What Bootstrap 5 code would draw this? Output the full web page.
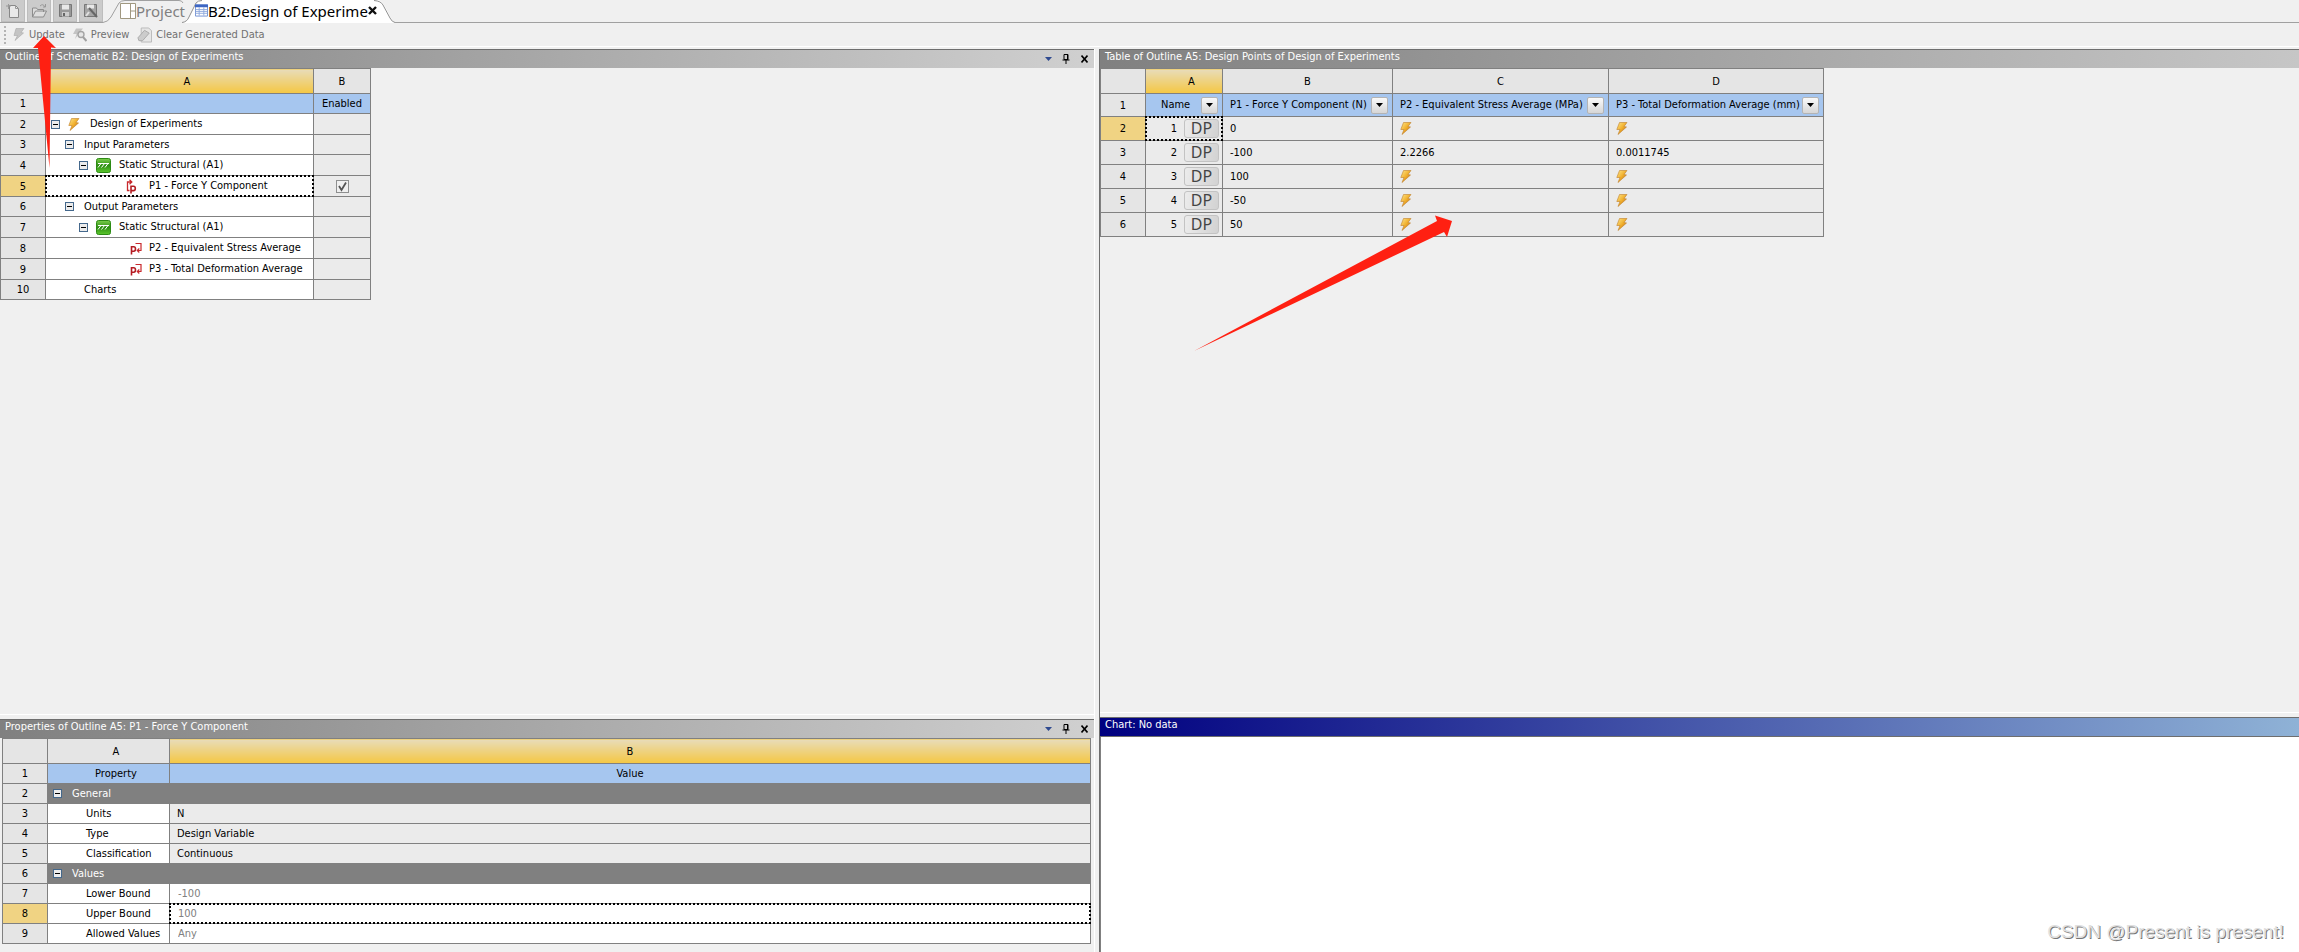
<!DOCTYPE html>
<html lang="en">
<head>
<meta charset="utf-8">
<meta name="viewport" content="width=device-width, initial-scale=1">
<title>B2:Design of Experiments</title>
<link href="https://cdn.jsdelivr.net/npm/bootstrap@5.3.0/dist/css/bootstrap.min.css" rel="stylesheet">
<style>
body{background:#f0f0f0;color:#000;font:11px/14px "DejaVu Sans Condensed","DejaVu Sans",sans-serif}
.tabstrip{height:23px;line-height:20px}
.tabstrip .rule{border-bottom:1px solid #a0a0a0}
.tool-set{padding-left:1px}
.tool-sq{width:24px;height:22px;padding:0;margin-right:2px;background:#cbcbcb;border:1px solid #bdbdbd;border-top:0;border-radius:0;display:flex;align-items:center;justify-content:center}
.doc-tab{position:relative;height:23px;padding-bottom:2px;font-family:"Noto Sans",sans-serif;font-size:15px;white-space:nowrap;color:#808080;text-decoration:none}
.doc-tab .shape{position:absolute;left:0;top:0;z-index:-1}
.tabs{isolation:isolate}
.tab-project{width:79px;padding-left:17px}
.tab-design{width:210px;padding-left:13px;color:#000}
.toolbar{height:24px;padding-left:4px;border-bottom:1px solid #fff;margin-bottom:2px}
.tb-btn{border:0;background:none;color:#707070;padding:0;display:flex;align-items:center;gap:4px;height:22px}
.tb-btn+.tb-btn{margin-left:8px}
.grip{width:2px;height:18px;margin-right:7px;background:repeating-linear-gradient(#b4b4b4 0 2px,transparent 2px 4px)}
.panes{display:grid;grid-template-columns:1094fr 6px 1199fr}
.splitter{border-left:1px solid #fff;border-right:1px solid #6e6e6e;background:#f0f0f0}
.pane-top-l{height:666px;border-bottom:1px solid #fff;margin-bottom:4px}
.pane-top-r{height:664px;border-bottom:1px solid #fff;margin-bottom:4px}
.bar{height:19px;border-top:1px solid #6e6e6e;background:linear-gradient(90deg,#808080,#d0d0d0);color:#fff;padding-left:5px;padding-right:1px}
.right-col .bar{background:linear-gradient(90deg,#808080,#c6c6c6)}
.bar h2{font-size:11px;line-height:13px;font-weight:400;margin:0}
.bar button{border:0;background:none;padding:0;width:18px;height:18px;display:flex;align-items:center;justify-content:center}
.right-col .bar-chart{background:linear-gradient(90deg,#000080,#8fb2d6);height:20px;border-bottom:1px solid #6e6e6e}
.sheet{border-collapse:collapse;table-layout:fixed}
.sheet td,.sheet th{border:1px solid #808080;padding:0;font-weight:400;overflow:visible;vertical-align:middle;white-space:nowrap}
.sheet thead th{height:25px;padding-top:2px;background:#e5e5e5;text-align:center}
.sheet tbody th{background:#e5e5e5;text-align:center;padding-top:1px}
.sheet thead th:nth-child(2),.props-wrap .cap td:nth-child(2){padding-left:15px}
.sheet thead th.hot{background:linear-gradient(#e8dcba,#f5c742)}
.sheet tbody th.hot{background:#f0d383}
.sheet .cap td{background:#a6c6ef;text-align:center}
.h20{height:20px}.h21{height:21px}.h23{height:23px}.h24{height:24px}
.ro{background:#ebebeb}.rw{background:#fff}
.sheet .grp td{background:#808080;color:#fff}
.props-wrap{padding:0 3px 0 2px}
.pick{position:relative}
.pick::after{content:"";position:absolute;inset:-1px;border:2px dotted #000;pointer-events:none}
.node{display:flex;align-items:center;height:19px}
.fold{width:9px;height:9px;border:1px solid #44688c;padding:0;background:linear-gradient(#000,#000) center/5px 1px no-repeat,#ececec;flex:none}
.lv1{padding-left:5px}.lv2{padding-left:19px}.lv3{padding-left:33px}.lv4{padding-left:80px}.lv5{padding-left:84px}
.txt{padding-left:10px}
.lv3 .txt{padding-left:8px}.lv4 .txt{padding-left:11px}.lv5 .txt{padding-left:7px}
.sheet .val{padding-left:7px}
.sheet .prop{padding-left:38px}
.entry{border:0;padding:0 0 0 8px;width:100%;height:18px;background:transparent;color:#808080;display:block;line-height:14px}
.tick{appearance:none;width:13px;height:13px;border:1px solid #8e8f8f;background:#f4f4f4;display:block;margin:0 auto}
.tick:checked{background:#f0f0f0 url("data:image/svg+xml,%3Csvg xmlns='http://www.w3.org/2000/svg' viewBox='0 0 11 11'%3E%3Cpath d='M2 5l2.500 4L9 1.500' fill='none' stroke='%23555' stroke-width='1.800'/%3E%3C/svg%3E")}
.dd{width:17px;height:17px;border:1px solid #b4b4b4;border-radius:2px;background:linear-gradient(#fafafa,#d6d6d6);padding:0;display:flex;align-items:center;justify-content:center}
.dd-cell{padding-right:4px}
.dp-cell{padding-right:3px;gap:7px}
.dp{width:35px;height:19px;border:1px solid #c3c3c3;border-radius:3px;background:linear-gradient(100deg,#ececec,#d2d2d2);color:#444;font:16px/16px "Noto Sans",sans-serif;padding:0 0 2px}
.mark-red{position:absolute;pointer-events:none}
.mark-a{left:33px;top:36px}.mark-b{left:1194px;top:215px}
.chart-area{position:relative;background:#fff;border-left:1px solid #808080}
.credit{position:absolute;right:15px;bottom:8px;font:19px/24px "Liberation Sans",sans-serif;color:#e0e0e0;text-shadow:1px 1px 0 #777}
</style>
</head>
<body class="position-relative d-flex flex-column min-vh-100">
<svg width="0" height="0" class="position-absolute" aria-hidden="true">
<defs>
<linearGradient id="gold" x2="1" y2="1"><stop stop-color="#ffe98a"/><stop offset=".5" stop-color="#f0ae2c"/><stop offset="1" stop-color="#a84e10"/></linearGradient>
<linearGradient id="leaf" x2="0" y2="1"><stop stop-color="#7ccf4c"/><stop offset=".5" stop-color="#2f8f14"/><stop offset="1" stop-color="#5cc82e"/></linearGradient>
</defs>
<symbol id="bolt" viewBox="0 0 12 13"><path d="M3.500.5H11L8 4.500l2.500.500L2 12.500l2-5H.8z" fill="url(#gold)" stroke="#c0802a" stroke-width=".6"/></symbol>
<symbol id="solid" viewBox="0 0 15 15"><rect x=".5" y=".5" width="14" height="14" rx="2" fill="url(#leaf)" stroke="#2c8a14"/><path d="M2 5.500h11M2 9.500l3-4M5.500 9.500l3-4M9 9.500l3-4" stroke="#fff" fill="none"/></symbol>
<symbol id="pin-in" viewBox="0 0 12 15"><path d="M3.500 11.500H1.500V3H5M3.500.8L5.800 3 3.500 5.200" fill="none" stroke="#c8282c" stroke-width="1.300"/><path d="M5 14.500V6.500M5 7.200h2.500q1.800 0 1.800 2.200t-1.800 2.200H5" fill="none" stroke="#b41c22" stroke-width="1.600"/></symbol>
<symbol id="pin-out" viewBox="0 0 12 13"><path d="M1.500 12.500V4M1.500 4.700h2.200q1.800 0 1.800 2.200T3.700 9.200H1.500" fill="none" stroke="#b41c22" stroke-width="1.600"/><path d="M5.500 1.500H11v7H7.500M9.300 6.500l-2 2 2 2" fill="none" stroke="#c8282c" stroke-width="1.200"/></symbol>
<symbol id="down" viewBox="0 0 7 4"><path d="M0 0h7L3.500 4z"/></symbol>
<symbol id="tack" viewBox="0 0 8 10"><path d="M2 .5h4v5H2zM.5 6h7M4 6v4M5.500 1v5" fill="none" stroke="#000"/></symbol>
<symbol id="cross" viewBox="0 0 7 8"><path d="M.5.5l6 7M6.500.5l-6 7" stroke="#000" stroke-width="1.600"/></symbol>
</svg>

<header>
  <div class="tabstrip d-flex">
    <div class="d-flex rule tool-set">
      <button class="tool-sq" aria-label="New"><svg width="16" height="16" viewBox="0 0 16 16"><path d="M4.500 2.500h6l3 3v9h-9z" fill="#e8e8e8" stroke="#888"/><path d="M10.500 2.500v3h3M1 3h5M3.500 1v5" stroke="#999" fill="none"/></svg></button>
      <button class="tool-sq" aria-label="Open"><svg width="17" height="16" viewBox="0 0 17 16"><path d="M1.500 14V5h4l1 1.500h6V9M1.500 14l3-6h11l-3 6z" fill="#ddd" stroke="#8c8c8c"/><path d="M9 3q3-3 5 1M14.500 1v3H12" stroke="#999" fill="none"/></svg></button>
      <button class="tool-sq" aria-label="Save"><svg width="15" height="15" viewBox="0 0 15 15"><path d="M1.500 1.500h12v12h-12z" fill="#999" stroke="#777"/><path d="M4 1.500h7v5H4z" fill="#e8e8e8"/><path d="M4 9h7v4.500H4z" fill="#ccc"/><path d="M5 10h2v3H5z" fill="#666"/></svg></button>
      <button class="tool-sq me-0" aria-label="Save As"><svg width="16" height="15" viewBox="0 0 16 15"><path d="M1.500 1.500h12v12h-12z" fill="#a4a4a4" stroke="#777"/><path d="M4 1.500h7v4H4z" fill="#e8e8e8"/><path d="M3 13l3-4" stroke="#e0e0e0" stroke-width="2"/><path d="M6 5l8 9" stroke="#666" stroke-width="2"/></svg></button>
    </div>
    <nav class="tabs d-flex" aria-label="Documents">
      <a href="#project" class="doc-tab tab-project d-flex align-items-center">
        <svg class="shape" width="92" height="23"><path d="M0 22.500Q5 22 8 17L16 3Q18 .5 22 .5H80L92 22.500z" fill="#f0f0f0"/><path d="M0 22.500Q5 22 8 17L16 3Q18 .5 22 .5H76Q79 .5 80 3" fill="none" stroke="#a0a0a0"/></svg>
        <svg width="16" height="16" viewBox="0 0 16 16" class="flex-shrink-0"><path d="M.5.5h15v15H.5zM10.500.5v15M10.500 8h5" fill="#fff" stroke="#a09880"/></svg><span>Project</span>
      </a>
      <a href="#design" class="doc-tab tab-design d-flex align-items-center" aria-current="page">
        <svg class="shape" width="213" height="23"><path d="M0 23Q5 22 7 17L14 3Q16 0 20 0H196Q200 1 202 5L209 18Q211 22 214 23z" fill="#fff"/><path d="M0 22.500Q5 22 7 17L14 3Q16 .5 20 .5M192 .5Q199 1 201 5L208 18Q210 22 213 22.500" fill="none" stroke="#909090"/></svg>
        <svg width="13" height="13" viewBox="0 0 14 13" class="flex-shrink-0"><path d="M.5.5h13v12H.5z" fill="#fff" stroke="#6f8fd0"/><path d="M0 0h14v3H0z" fill="#3c66c4"/><path d="M1 5.500h12M1 7.500h12M1 9.500h12M4.500 3v9M9.500 3v9" stroke="#8fa9de"/></svg><span>B2:Design of Experime</span>
        <svg width="9" height="9" viewBox="0 0 9 9" class="flex-shrink-0" role="img" aria-label="Close"><path d="M1 1l7 7M8 1L1 8" stroke="#111" stroke-width="2.400"/></svg>
      </a>
    </nav>
    <div class="flex-grow-1 rule"></div>
  </div>
  <div class="toolbar d-flex align-items-center" role="toolbar" aria-label="Design of Experiments">
    <span class="grip"></span>
    <button class="tb-btn"><svg width="12" height="13" viewBox="0 0 12 13"><path d="M3 .5h8L8 4.500l2.500.500L2 12.500l2.500-5H1z" fill="#c4c4c4" stroke="#aaa" stroke-width=".6"/></svg>Update</button>
    <button class="tb-btn"><svg width="14" height="14" viewBox="0 0 14 14"><path d="M3 .5h7L7 4 2 11l1.500-5H0z" fill="#c4c4c4"/><circle cx="8" cy="6.500" r="3" fill="#e6e6e6" stroke="#a4a4a4" stroke-width="1.400"/><path d="M10 9l3.500 4" stroke="#a0a0a0" stroke-width="2"/></svg>Preview</button>
    <button class="tb-btn gap-1"><svg width="15" height="16" viewBox="0 0 16 16"><path d="M4.500.5h8l3 3v12h-11z" fill="#e6e6e6" stroke="#b8b8b8"/><path d="M1 11L8 3l5 3-7 8H2z" fill="#ccc" stroke="#aaa"/></svg>Clear Generated Data</button>
  </div>
</header>

<main class="panes flex-grow-1">
  <div>
    <section class="pane-top-l">
      <div class="bar d-flex justify-content-between"><h2>Outline of Schematic B2: Design of Experiments</h2>
        <div class="d-flex"><button aria-label="Menu"><svg width="7" height="4" fill="#2f4a90"><use href="#down"/></svg></button><button aria-label="Pin"><svg width="8" height="10"><use href="#tack"/></svg></button><button aria-label="Close"><svg width="7" height="8"><use href="#cross"/></svg></button></div></div>
      <table class="sheet">
        <colgroup><col style="width:45px"><col style="width:268px"><col style="width:57px"></colgroup>
        <thead><tr><th></th><th class="hot">A</th><th>B</th></tr></thead>
        <tbody>
        <tr class="cap h20"><th>1</th><td></td><td>Enabled</td></tr>
        <tr class="h21"><th>2</th><td class="rw"><div class="node lv1"><button class="fold" aria-label="Collapse"></button><svg class="ms-2" width="12" height="13"><use href="#bolt"/></svg><span class="txt">Design of Experiments</span></div></td><td class="ro"></td></tr>
        <tr class="h20"><th>3</th><td class="rw"><div class="node lv2"><button class="fold" aria-label="Collapse"></button><span class="txt">Input Parameters</span></div></td><td class="ro"></td></tr>
        <tr class="h21"><th>4</th><td class="rw"><div class="node lv3"><button class="fold" aria-label="Collapse"></button><svg class="ms-2" width="15" height="15"><use href="#solid"/></svg><span class="txt">Static Structural (A1)</span></div></td><td class="ro"></td></tr>
        <tr class="h21"><th class="hot">5</th><td class="rw pick"><div class="node lv4"><svg width="12" height="15"><use href="#pin-in"/></svg><span class="txt">P1 - Force Y Component</span></div></td><td class="ro"><input type="checkbox" class="tick" checked aria-label="Enabled"></td></tr>
        <tr class="h20"><th>6</th><td class="rw"><div class="node lv2"><button class="fold" aria-label="Collapse"></button><span class="txt">Output Parameters</span></div></td><td class="ro"></td></tr>
        <tr class="h21"><th>7</th><td class="rw"><div class="node lv3"><button class="fold" aria-label="Collapse"></button><svg class="ms-2" width="15" height="15"><use href="#solid"/></svg><span class="txt">Static Structural (A1)</span></div></td><td class="ro"></td></tr>
        <tr class="h21"><th>8</th><td class="rw"><div class="node lv5"><svg width="12" height="13"><use href="#pin-out"/></svg><span class="txt">P2 - Equivalent Stress Average</span></div></td><td class="ro"></td></tr>
        <tr class="h21"><th>9</th><td class="rw"><div class="node lv5"><svg width="12" height="13"><use href="#pin-out"/></svg><span class="txt">P3 - Total Deformation Average</span></div></td><td class="ro"></td></tr>
        <tr class="h20"><th>10</th><td class="rw"><div class="node prop">Charts</div></td><td class="ro"></td></tr>
        </tbody>
      </table>
    </section>
    <section>
      <div class="bar d-flex justify-content-between"><h2>Properties of Outline A5: P1 - Force Y Component</h2>
        <div class="d-flex"><button aria-label="Menu"><svg width="7" height="4" fill="#2f4a90"><use href="#down"/></svg></button><button aria-label="Pin"><svg width="8" height="10"><use href="#tack"/></svg></button><button aria-label="Close"><svg width="7" height="8"><use href="#cross"/></svg></button></div></div>
      <div class="props-wrap">
      <table class="sheet w-100">
        <colgroup><col style="width:45px"><col style="width:122px"><col></colgroup>
        <thead><tr><th></th><th>A</th><th class="hot">B</th></tr></thead>
        <tbody>
        <tr class="cap h20"><th>1</th><td>Property</td><td>Value</td></tr>
        <tr class="grp h20"><th>2</th><td colspan="2"><div class="node lv1"><button class="fold" aria-label="Collapse"></button><span class="txt">General</span></div></td></tr>
        <tr class="h20"><th>3</th><td class="rw prop">Units</td><td class="ro val">N</td></tr>
        <tr class="h20"><th>4</th><td class="rw prop">Type</td><td class="ro val">Design Variable</td></tr>
        <tr class="h20"><th>5</th><td class="rw prop">Classification</td><td class="ro val">Continuous</td></tr>
        <tr class="grp h20"><th>6</th><td colspan="2"><div class="node lv1"><button class="fold" aria-label="Collapse"></button><span class="txt">Values</span></div></td></tr>
        <tr class="h20"><th>7</th><td class="rw prop"><label for="lo">Lower Bound</label></td><td class="rw"><input class="entry" id="lo" value="-100"></td></tr>
        <tr class="h20"><th class="hot">8</th><td class="rw prop"><label for="hi">Upper Bound</label></td><td class="rw pick"><input class="entry" id="hi" value="100"></td></tr>
        <tr class="h20"><th>9</th><td class="rw prop"><label for="any">Allowed Values</label></td><td class="rw"><input class="entry" id="any" value="Any"></td></tr>
        </tbody>
      </table>
      </div>
    </section>
  </div>
  <div class="splitter"></div>
  <div class="right-col d-flex flex-column">
    <section class="pane-top-r">
      <div class="bar"><h2>Table of Outline A5: Design Points of Design of Experiments</h2></div>
      <table class="sheet">
        <colgroup><col style="width:45px"><col style="width:77px"><col style="width:170px"><col style="width:216px"><col style="width:215px"></colgroup>
        <thead><tr><th></th><th class="hot">A</th><th>B</th><th>C</th><th>D</th></tr></thead>
        <tbody>
        <tr class="cap h23"><th>1</th>
          <td><div class="node val justify-content-between dd-cell"><span class="ps-2">Name</span><button class="dd" aria-label="Filter"><svg width="7" height="4"><use href="#down"/></svg></button></div></td>
          <td><div class="node val justify-content-between dd-cell"><span>P1 - Force Y Component (N)</span><button class="dd" aria-label="Filter"><svg width="7" height="4"><use href="#down"/></svg></button></div></td>
          <td><div class="node val justify-content-between dd-cell"><span>P2 - Equivalent Stress Average (MPa)</span><button class="dd" aria-label="Filter"><svg width="7" height="4"><use href="#down"/></svg></button></div></td>
          <td><div class="node val justify-content-between dd-cell"><span>P3 - Total Deformation Average (mm)</span><button class="dd" aria-label="Filter"><svg width="7" height="4"><use href="#down"/></svg></button></div></td></tr>
        <tr class="h24"><th class="hot">2</th><td class="ro pick"><div class="node justify-content-end dp-cell"><span>1</span><button class="dp">DP</button></div></td><td class="ro val">0</td><td class="ro val"><svg width="12" height="13"><use href="#bolt"/></svg></td><td class="ro val"><svg width="12" height="13"><use href="#bolt"/></svg></td></tr>
        <tr class="h24"><th>3</th><td class="ro"><div class="node justify-content-end dp-cell"><span>2</span><button class="dp">DP</button></div></td><td class="ro val">-100</td><td class="ro val">2.2266</td><td class="ro val">0.0011745</td></tr>
        <tr class="h24"><th>4</th><td class="ro"><div class="node justify-content-end dp-cell"><span>3</span><button class="dp">DP</button></div></td><td class="ro val">100</td><td class="ro val"><svg width="12" height="13"><use href="#bolt"/></svg></td><td class="ro val"><svg width="12" height="13"><use href="#bolt"/></svg></td></tr>
        <tr class="h24"><th>5</th><td class="ro"><div class="node justify-content-end dp-cell"><span>4</span><button class="dp">DP</button></div></td><td class="ro val">-50</td><td class="ro val"><svg width="12" height="13"><use href="#bolt"/></svg></td><td class="ro val"><svg width="12" height="13"><use href="#bolt"/></svg></td></tr>
        <tr class="h24"><th>6</th><td class="ro"><div class="node justify-content-end dp-cell"><span>5</span><button class="dp">DP</button></div></td><td class="ro val">50</td><td class="ro val"><svg width="12" height="13"><use href="#bolt"/></svg></td><td class="ro val"><svg width="12" height="13"><use href="#bolt"/></svg></td></tr>
        </tbody>
      </table>
    </section>
    <section class="d-flex flex-column flex-grow-1">
      <div class="bar bar-chart"><h2>Chart: No data</h2></div>
      <div class="chart-area flex-grow-1"><span class="credit">CSDN @Present is present!</span></div>
    </section>
  </div>
</main>

<svg class="mark-red mark-a" width="24" height="133" aria-hidden="true"><path d="M11 0L23 12L18 11.500L16.500 132L5 12L0 12z" fill="#ff2012"/></svg>
<svg class="mark-red mark-b" width="260" height="137" aria-hidden="true"><path d="M0 136L243 6L241 0.500L258 6L253 22L250 17z" fill="#ff2012"/></svg>
<script src="https://cdn.jsdelivr.net/npm/bootstrap@5.3.0/dist/js/bootstrap.bundle.min.js"></script>
</body>
</html>
